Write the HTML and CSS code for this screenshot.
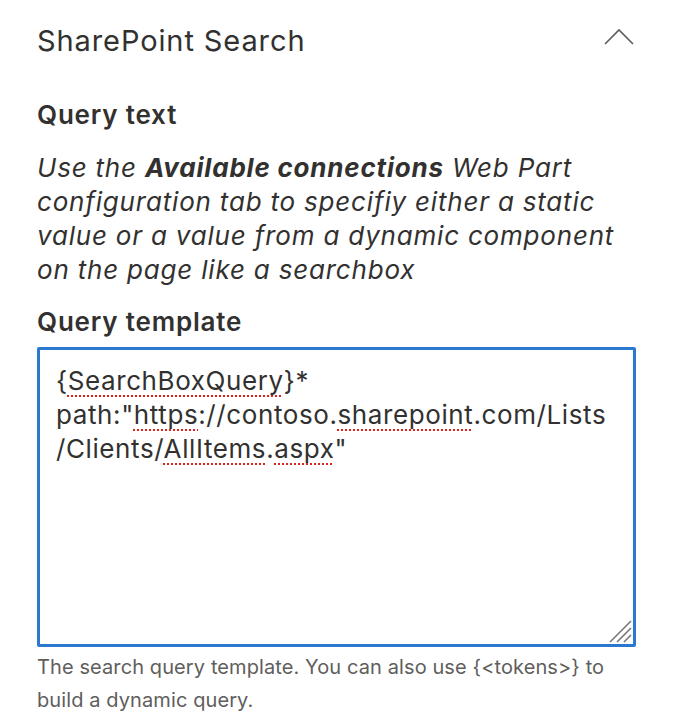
FILE: index.html
```html
<!DOCTYPE html>
<html lang="en">
<head>
    <meta charset="UTF-8">
    <meta name="viewport" content="width=device-width, initial-scale=1.0">
    <title>SharePoint Search</title>
    <link rel="stylesheet" href="styles.css">
</head>
<body>
    <div class="panel">
        <div class="group-header">
            <span class="group-title">SharePoint Search</span>
            <svg class="chevron" width="30" height="18" viewBox="0 0 30 18">
                <polyline points="1,16 15,2 29,16" fill="none" stroke="#605e5c" stroke-width="1.6"/>
            </svg>
        </div>

        <div class="field">
            <div class="label">Query text</div>
            <div class="description">Use the <b>Available connections</b> Web Part configuration tab to specifiy either a static value or a value from a dynamic component on the page like a searchbox</div>
        </div>

        <div class="field">
            <div class="label">Query template</div>
            <div class="template-wrap">
                <div class="template-box" contenteditable="true" spellcheck="false">{<span class="misspelled">SearchBoxQuery</span>}*<br>path:"<span class="misspelled">https</span>://contoso.<span class="misspelled">sharepoint</span>.com/Lists<br>/Clients/<span class="misspelled">AllItems</span>.<span class="misspelled">aspx</span>"</div>
                <!-- resize grip -->
                <svg class="grip" width="24" height="24" viewBox="0 0 24 24">
                    <g stroke="#777" stroke-width="1.6">
                        <line x1="2" y1="23" x2="23" y2="2"/>
                        <line x1="9" y1="23" x2="23" y2="9"/>
                        <line x1="16" y1="23" x2="23" y2="16"/>
                    </g>
                </svg>
            </div>
            <div class="hint">The search query template. You can also use {&lt;tokens&gt;} to build a dynamic query.</div>
        </div>
    </div>
</body>
</html>
```

FILE: styles.css
```css
body {
    margin: 0;
    padding: 0;
    background-color: #fff;
    font-family: Inter, Roboto, sans-serif;
    color: #323130;
}
.panel {
    padding: 0 38px 0 37px;
}
.group-header {
    display: flex;
    justify-content: space-between;
    align-items: center;
    height: 80px;
}
.group-title {
    font-size: 29px;
    letter-spacing: 0.9px;
}
.chevron {
    margin-right: 2px;
    margin-top: -6px;
}
.field {
    margin-top: 18px;
}
.label {
    font-size: 26px;
    font-weight: 600;
    line-height: 34px;
    letter-spacing: 0.8px;
}
.description {
    font-size: 26px;
    font-style: italic;
    line-height: 34px;
    letter-spacing: 0.8px;
    margin-top: 19px;
}
.description b {
    font-weight: 700;
}
.template-wrap {
    position: relative;
    margin-top: 8px;
}
.template-box {
    box-sizing: border-box;
    height: 300px;
    padding: 14px 16px;
    border: 3px solid #2b78d0;
    border-radius: 2px;
    font-size: 26px;
    line-height: 34px;
    letter-spacing: 0.6px;
    overflow: auto;
    outline: none;
}
.grip {
    position: absolute;
    right: 4px;
    bottom: 4px;
}
.misspelled {
    text-decoration: underline dotted #e0221f;
    text-decoration-thickness: 2px;
    text-underline-offset: 5px;
}
.hint {
    font-size: 20px;
    line-height: 33px;
    letter-spacing: 0.1px;
    color: #605e5c;
    margin-top: 4px;
}
```
